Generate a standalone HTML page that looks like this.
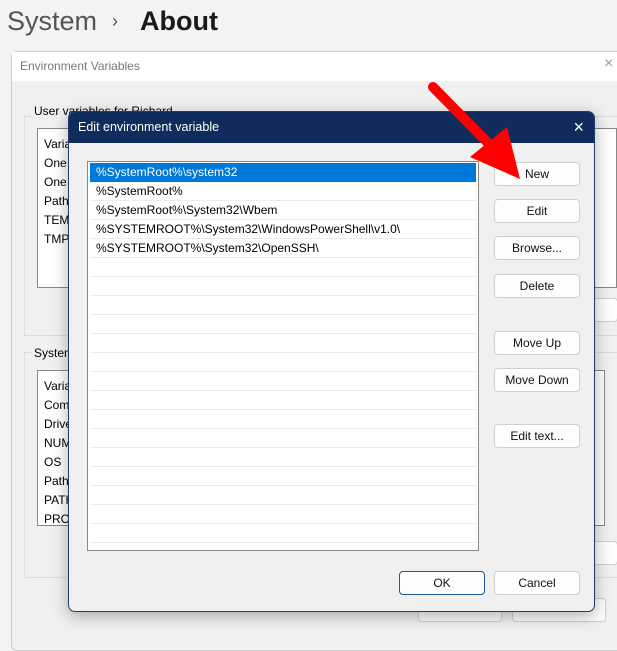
<!DOCTYPE html>
<html><head><style>
*{box-sizing:border-box;margin:0;padding:0}
body{width:617px;height:625px;background:#f3f3f3;font-family:"Liberation Sans",sans-serif;position:relative;overflow:hidden;font-size:12px;color:#000}
.abs{position:absolute}
.btn{position:absolute;width:86px;height:24px;background:#fdfdfd;border:1px solid #d0d0d0;border-radius:4px;text-align:center;line-height:22px;font-size:12px;color:#111}
.row{height:19px;line-height:19px;padding-left:6px;border-bottom:1px solid #ececec;font-size:12px;white-space:nowrap}
</style></head><body>
<div class="abs" style="left:7px;top:6px;font-size:27px;color:#555">System</div>
<div class="abs" style="left:112px;top:11px;font-size:18px;color:#555">›</div>
<div class="abs" style="left:140px;top:6px;font-size:27px;font-weight:bold;color:#1a1a1a">About</div>
<!-- background window -->
<div class="abs" style="left:11px;top:51px;width:620px;height:600px;background:#f0f0f0;border:1px solid #ccc;border-radius:6px"></div>
<div class="abs" style="left:12px;top:52px;width:610px;height:29px;background:#fff;"></div>
<div class="abs" style="left:20px;top:59px;font-size:12px;color:#777">Environment Variables</div>
<div class="abs" style="left:604px;top:55px;font-size:16px;color:#999">×</div>
<div class="abs" style="left:24px;top:116px;width:600px;height:220px;border:1px solid #ddd"></div>
<div class="abs" style="left:32px;top:104px;background:#f0f0f0;padding:0 2px;font-size:12px">User variables for Richard</div>
<div class="abs" style="left:37px;top:128px;width:580px;height:160px;background:#fff;border:1px solid #888;padding:6px 6px;line-height:19px">Varia<br>One<br>One<br>Path<br>TEM<br>TMP</div>
<div class="abs" style="left:24px;top:352px;width:600px;height:226px;border:1px solid #ddd"></div>
<div class="abs" style="left:32px;top:346px;background:#f0f0f0;padding:0 2px">System</div>
<div class="abs" style="left:37px;top:370px;width:568px;height:156px;background:#fff;border:1px solid #888;padding:6px 6px;line-height:19px;overflow:hidden">Varia<br>Com<br>Drive<br>NUM<br>OS<br>Path<br>PATH<br>PRO</div>
<div class="abs" style="left:588px;top:298px;width:30px;height:24px;background:#fdfdfd;border:1px solid #d0d0d0;border-radius:4px"></div>
<div class="abs" style="left:588px;top:541px;width:30px;height:24px;background:#fdfdfd;border:1px solid #d0d0d0;border-radius:4px"></div>
<div class="abs" style="left:418px;top:598px;width:84px;height:24px;background:#fdfdfd;border:1px solid #d0d0d0;border-radius:4px"></div>
<div class="abs" style="left:512px;top:598px;width:94px;height:24px;background:#fdfdfd;border:1px solid #d0d0d0;border-radius:4px"></div>
<!-- dialog -->
<div class="abs" style="left:68px;top:111px;width:527px;height:501px;background:#f0f0f0;border:1px solid #1f3d6e;border-radius:7px;box-shadow:0 4px 16px rgba(0,0,0,.3);overflow:hidden">
 <div style="height:31px;background:#0f2c5c;color:#fff;font-size:12.5px;line-height:31px;padding-left:9px">Edit environment variable<span style="position:absolute;right:10px;top:0;font-size:18px">×</span></div>
</div>
<div class="abs" style="left:87px;top:161px;width:392px;height:390px;background:#fff;border:1px solid #888;padding:1px 2px">
 <div class="row" style="background:#0078d7;color:#fff;border-color:#0078d7">%SystemRoot%\system32</div>
 <div class="row">%SystemRoot%</div>
 <div class="row">%SystemRoot%\System32\Wbem</div>
 <div class="row">%SYSTEMROOT%\System32\WindowsPowerShell\v1.0\</div>
 <div class="row">%SYSTEMROOT%\System32\OpenSSH\</div>
 <div class="row"></div><div class="row"></div><div class="row"></div><div class="row"></div><div class="row"></div>
 <div class="row"></div><div class="row"></div><div class="row"></div><div class="row"></div><div class="row"></div>
 <div class="row"></div><div class="row"></div><div class="row"></div><div class="row"></div><div class="row"></div>
</div>
<div class="btn" style="left:494px;top:162px">New</div>
<div class="btn" style="left:494px;top:199px">Edit</div>
<div class="btn" style="left:494px;top:236px">Browse...</div>
<div class="btn" style="left:494px;top:274px">Delete</div>
<div class="btn" style="left:494px;top:331px">Move Up</div>
<div class="btn" style="left:494px;top:368px">Move Down</div>
<div class="btn" style="left:494px;top:424px">Edit text...</div>
<div class="btn" style="left:399px;top:571px;border:1px solid #1a5d9a">OK</div>
<div class="btn" style="left:494px;top:571px">Cancel</div>
<svg class="abs" style="left:0;top:0" width="617" height="625">
 <path d="M433 87 L490 145" stroke="#f00" stroke-width="10" stroke-linecap="round"/>
 <polygon points="470,157 507,127 520,179" fill="#f00"/>
</svg>
</body></html>
